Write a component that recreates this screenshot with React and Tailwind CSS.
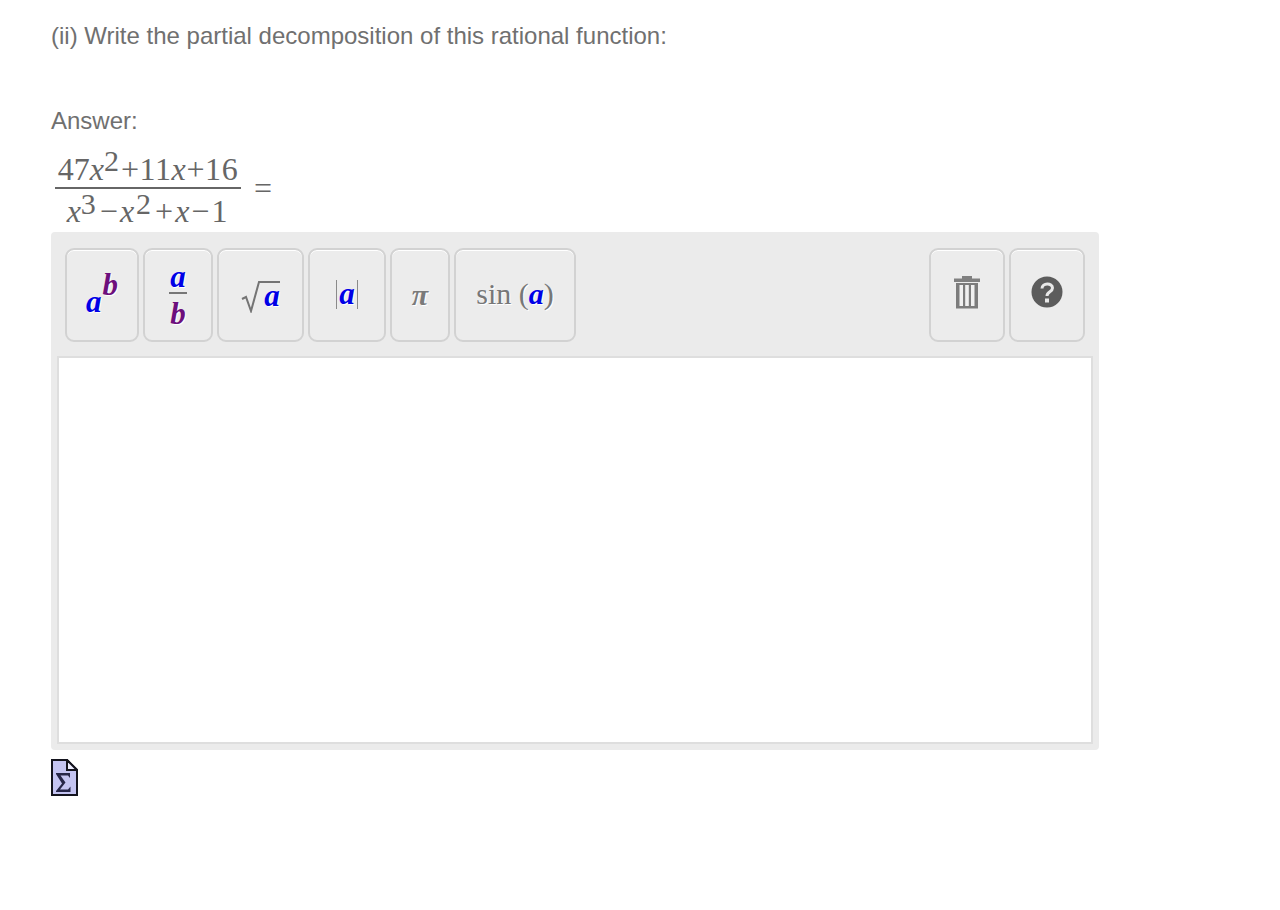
const serif = "font-['Liberation_Serif',serif]";

function Btn({ w, children }) {
  return (
    <div className={`${w} h-[94px] shrink-0 rounded-[9px] border-2 border-[#d2d2d2] bg-[#ececec] shadow-[inset_0_1px_0_#ffffff] flex items-center justify-center`}>
      {children}
    </div>
  );
}

const A = ({ className = "" }) => (
  <span className={`italic font-bold text-[#0000e6] [text-shadow:1px_1px_0_#fff] ${className}`}>a</span>
);
const B = ({ className = "" }) => (
  <span className={`italic font-bold text-[#6d0f7c] [text-shadow:1px_1px_0_#fff] ${className}`}>b</span>
);

export default function App() {
  return (
    <div className="min-h-[910px] bg-white pl-[51px] pt-[21px] font-['Liberation_Sans',sans-serif] text-[#707070]">
      <div className="text-[24px] leading-[30px]">(ii) Write the partial decomposition of this rational function:</div>
      <div className="mt-[55px] text-[24px] leading-[30px]">Answer:</div>

      <div className={`mt-[14px] h-[75px] flex items-center ${serif} text-[#666666]`}>
        <div className="ml-[4px] w-[186px] flex flex-col items-center">
          <div className="h-[36px] pb-[3px] flex items-end text-[32px] leading-[30px] whitespace-nowrap">
            <span>47<i>x</i></span>
            <span className="text-[30px] leading-[30px] mb-[8px]">2</span>
            <span className="ml-[2px] tracking-[0.6px]">+11<i>x</i>+16</span>
          </div>
          <div className="w-full h-[2px] bg-[#666666]" />
          <div className="h-[37px] -mb-[1px] flex items-end text-[32px] leading-[30px] whitespace-nowrap">
            <i>x</i>
            <span className="text-[30px] leading-[30px] mb-[7px]">3</span>
            <span className="ml-[4px] tracking-[2px]">−<i>x</i></span>
            <span className="text-[30px] leading-[30px] mb-[7px]">2</span>
            <span className="ml-[4px] tracking-[2px]">+<i>x</i>−1</span>
          </div>
        </div>
        <span className="ml-[13px] text-[32px] leading-none">=</span>
      </div>

      <div className="mt-[7px] w-[1048px] h-[518px] rounded-[4px] bg-[#ebebeb] px-[6px] pt-[16px]">
        <div className={`flex justify-between pl-[8px] pr-[8px] h-[94px] ${serif}`}>
          <div className="flex gap-[4px]">
            <Btn w="w-[74px]">
              <span className="relative flex items-start text-[31px] leading-none">
                <A className="mt-[12px]" />
                <B className="-mt-[5px] ml-[1px]" />
              </span>
            </Btn>
            <Btn w="w-[70px]">
              <div className="flex flex-col items-center text-[31px] leading-[28px]">
                <A className="-mb-[2px]" />
                <div className="mt-[3px] mb-[6px] w-[18px] h-[2px] bg-[#777777]" />
                <B />
              </div>
            </Btn>
            <Btn w="w-[87px]">
              <span className="relative top-[1px] flex items-center">
                <svg width="25" height="34" viewBox="0 0 25 34" className="-mr-[1px]">
                  <path d="M1 20 L5 18 L10 32 L18 3 L25 3" fill="none" stroke="#747474" strokeWidth="2" />
                </svg>
                <span className="-ml-[1px] border-t-2 border-[#747474] h-[31px] flex items-center">
                  <A className="text-[31px] leading-none -mt-[4px]" />
                </span>
              </span>
            </Btn>
            <Btn w="w-[78px]">
              <span className="relative -top-[1px] flex items-center text-[31px] leading-none text-[#777777]">
                <span className="w-[1.5px] h-[29px] bg-[#8a8a8a]" />
                <A className="mx-[2px] -mt-[2px]" />
                <span className="w-[1.5px] h-[29px] bg-[#8a8a8a]" />
              </span>
            </Btn>
            <Btn w="w-[60px]">
              <span className="text-[30px] leading-none italic font-bold text-[#7a7a7a] [text-shadow:1px_1px_0_#fff]">π</span>
            </Btn>
            <Btn w="w-[122px]">
              <span className="relative -top-[1px] text-[30px] leading-none whitespace-nowrap text-[#777777] [text-shadow:1px_1px_0_#fff]">sin (<A />)</span>
            </Btn>
          </div>
          <div className="flex gap-[4px]">
            <Btn w="w-[76px]">
              <svg width="30" height="34" viewBox="0 0 30 34" className="relative -top-[3px]">
                <path d="M10 1 H20 V3.5 H28 V7 H2 V3.5 H10 Z" fill="#808080" />
                <path d="M4 8 H26 V33.5 H4 Z" fill="#7c7c7c" />
                <path d="M7.5 10 H11 V31 H7.5 Z M13.2 10 H16.8 V31 H13.2 Z M19 10 H22.5 V31 H19 Z" fill="#f0f0f0" />
              </svg>
            </Btn>
            <Btn w="w-[76px]">
              <svg width="32" height="32" viewBox="0 0 32 32" className="relative -top-[3px]">
                <circle cx="16" cy="16" r="15.5" fill="#5c5c5c" />
                <path d="M11 12.5 C11 6.5 21.5 6.5 21.5 12 C21.5 16 16 15.5 16 20" fill="none" stroke="#e8e8e8" strokeWidth="3" />
                <path d="M14 22.5 H18 V26.5 H14 Z" fill="#e8e8e8" />
              </svg>
            </Btn>
          </div>
        </div>
        <div className="mt-[14px] h-[388px] w-[1036px] border-2 border-[#dedede] bg-white" />
      </div>

      <svg width="27" height="37" viewBox="0 0 27 37" className="mt-[9px] block">
        <path d="M1 1 H16 L26 11 V36 H1 Z" fill="#c4c4f2" stroke="#14141e" strokeWidth="2" />
        <path d="M16 1 V11 H26 Z" fill="#eeeeff" stroke="#14141e" strokeWidth="2" />
        <path d="M5 14 H19 V19 L17 16.5 H9.5 L14.5 23.5 L9 30.5 H17 L19.5 27.5 V33 H5 V32 L11 24.5 L5 15 Z" fill="#262648" />
      </svg>
    </div>
  );
}
